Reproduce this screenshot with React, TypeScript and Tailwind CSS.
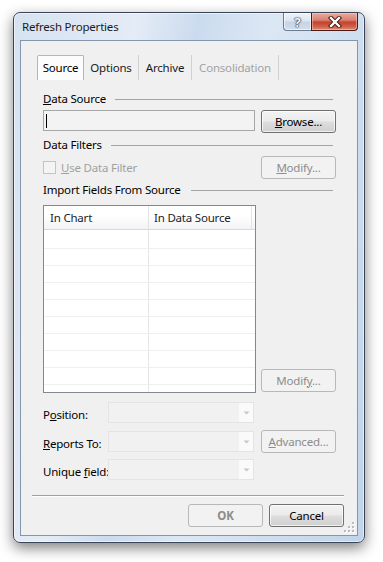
import React from "react";

const Btn = ({
  children,
  disabled,
  className = "",
}: {
  children: React.ReactNode;
  disabled?: boolean;
  className?: string;
}) => (
  <div
    className={
      "h-[23px] w-[75px] rounded-[3px] flex items-center justify-center shrink-0 " +
      (disabled
        ? "border border-[#b6b8bb] bg-[#f2f2f2] text-[#8c8c8c] "
        : "border border-[#707070] bg-[linear-gradient(#f3f3f3_0%,#ebebeb_48%,#dddddd_52%,#d0d0d0_100%)] shadow-[inset_0_0_0_1px_rgba(255,255,255,0.7)] text-black ") +
      className
    }
  >
    {children}
  </div>
);

const Combo = () => (
  <div className="w-[146px] h-[21px] flex border border-[#e4e4e4] bg-[#f1f1f1]">
    <div className="flex-1" />
    <div className="w-[14px] bg-[#fafafa] flex items-center justify-center">
      <svg width="7" height="4" viewBox="0 0 7 4">
        <path d="M0.5 0.5 L6.5 0.5 L3.5 3.5 Z" fill="#c6c6c6" />
      </svg>
    </div>
  </div>
);

export default function App() {
  const rows = Array.from({ length: 9 });
  return (
    <div className="w-[383px] h-[562px] bg-white pt-[12px] pl-[13px] font-['Noto_Sans','DejaVu_Sans',sans-serif] text-[11.5px] tracking-[-0.2px] leading-[16px] text-black">
      <div className="w-[352px] h-[531px] rounded-[7px] border border-[#3a4658] shadow-[inset_0_0_0_1px_rgba(255,255,255,0.55),0_5px_14px_rgba(0,0,0,0.5)] bg-[linear-gradient(100deg,#d6e2f0_0%,#e4ecf6_28%,#cbdbee_42%,#dce7f4_58%,#c0d4ea_100%)] flex flex-col overflow-hidden">
        {/* Title bar */}
        <div className="h-[27px] flex items-start shrink-0">
          <div className="pl-[8px] pt-[6px] text-[11.5px] text-[#1b1b1b] whitespace-nowrap">Refresh Properties</div>
          <div className="ml-auto mr-[6px] flex">
            <div className="w-[28px] h-[18px] border-l border-b border-[#6c7b90] rounded-bl-[4px] bg-[linear-gradient(#f0f4f9_0%,#dce5f0_45%,#c6d4e5_55%,#d2deec_100%)] shadow-[inset_0_0_0_1px_rgba(255,255,255,0.6)] flex items-center justify-center">
              <span className="font-bold text-[13px] leading-[14px] text-[#f4f6f9] [text-shadow:0_0_1px_#2e3a4a,0_0_1px_#2e3a4a,0_0_2px_#2e3a4a]">?</span>
            </div>
            <div className="w-[47px] h-[18px] border-l border-b border-r border-[#4a1a14] rounded-br-[4px] bg-[linear-gradient(#e8ab9f_0%,#d98474_40%,#c5432f_55%,#d0614c_80%,#e08d76_100%)] shadow-[inset_0_0_0_1px_rgba(255,220,210,0.45)] flex items-center justify-center">
              <svg width="14" height="12" viewBox="0 0 14 12">
                <path d="M3 2 L11 10 M11 2 L3 10" stroke="#3a1410" strokeWidth="4.2" strokeLinecap="square" />
                <path d="M3 2 L11 10 M11 2 L3 10" stroke="#ffffff" strokeWidth="2.4" strokeLinecap="square" />
              </svg>
            </div>
          </div>
        </div>

        {/* Client */}
        <div className="relative mx-[6px] mb-[6px] flex-1 border border-[#8496ad] bg-[#f0f0f0] flex flex-col">
          {/* Tabs */}
          <div className="ml-[16px] mt-[14px] h-[25px] flex">
            <div className="w-[47px] h-[25px] bg-[#fcfcfc] border-l border-r border-t border-[#b5b5b5] rounded-t-[2px] flex items-center justify-center">
              Source
            </div>
            <div className="w-[55px] border-r border-[#d0d0d0] flex items-center justify-center text-[#1a1a1a]">
              Options
            </div>
            <div className="w-[53px] border-r border-[#d0d0d0] flex items-center justify-center text-[#1a1a1a]">
              Archive
            </div>
            <div className="w-[87px] border-r border-[#d0d0d0] flex items-center justify-center text-[#a2a2a2]">
              Consolidation
            </div>
          </div>

          {/* Panel */}
          <div className="ml-[22px] w-[293px] flex flex-col">
            <div className="mt-[11px] h-[16px] flex items-center w-[290px]">
              <span className="whitespace-nowrap">
                <u>D</u>ata Source
              </span>
              <div className="flex-1 h-px bg-[#a3a3a3] ml-[9px]" />
            </div>
            <div className="mt-[3px] h-[23px] flex items-start">
              <div className="w-[212px] h-[21px] border border-[#a7a7a7] bg-[#f3f3f3] flex items-center pl-[2px]">
                <div className="w-px h-[14px] bg-black" />
              </div>
              <Btn className="ml-auto">
                <span>
                  <u>B</u>rowse...
                </span>
              </Btn>
            </div>

            <div className="mt-[4px] h-[16px] flex items-center w-[290px]">
              <span className="whitespace-nowrap">Data Filters</span>
              <div className="flex-1 h-px bg-[#a3a3a3] ml-[9px]" />
            </div>
            <div className="mt-[3px] h-[23px] flex items-center">
              <div className="w-[13px] h-[13px] border border-[#c4c4c4] bg-[#f4f4f4]" />
              <span className="ml-[5px] text-[#a0a0a0]">
                <u>U</u>se Data Filter
              </span>
              <Btn disabled className="ml-auto">
                <span>
                  <u>M</u>odify...
                </span>
              </Btn>
            </div>

            <div className="mt-[3px] h-[16px] flex items-center w-[290px]">
              <span className="whitespace-nowrap">Import Fields From Source</span>
              <div className="flex-1 h-px bg-[#a3a3a3] ml-[10px]" />
            </div>
            <div className="mt-[7px] h-[188px] flex items-end">
              <div className="w-[213px] h-[188px] border border-[#838790] bg-white flex flex-col overflow-hidden">
                <div className="h-[24px] shrink-0 flex border-b border-[#d8d8d8] bg-[linear-gradient(#ffffff_0%,#ffffff_40%,#f2f3f5_100%)]">
                  <div className="w-[105px] border-r border-[#e3e3e3] pl-[6px] flex items-center text-[#1c1c2c]">
                    In Chart
                  </div>
                  <div className="w-[103px] border-r border-[#e3e3e3] pl-[5px] flex items-center text-[#1c1c2c]">
                    In Data Source
                  </div>
                </div>
                {rows.map((_, i) => (
                  <div
                    key={i}
                    className={(i === 0 ? "h-[19px] " : "h-[17px] ") + "shrink-0 flex border-b border-[#efefef]"}
                  >
                    <div className="w-[105px] border-r border-[#e6e6e6]" />
                  </div>
                ))}
                <div className="flex-1 flex">
                  <div className="w-[105px] border-r border-[#e6e6e6]" />
                </div>
              </div>
              <Btn disabled className="ml-auto mb-[1px]">
                <span>
                  Modif<u>y</u>...
                </span>
              </Btn>
            </div>

            <div className="mt-[9px] h-[21px] flex items-center">
              <span className="w-[65px] shrink-0 pt-[4px] whitespace-nowrap">
                P<u>o</u>sition:
              </span>
              <Combo />
            </div>
            <div className="mt-[8px] h-[21px] flex items-center">
              <span className="w-[65px] shrink-0 pt-[4px] whitespace-nowrap">
                <u>R</u>eports To:
              </span>
              <Combo />
              <Btn disabled className="ml-auto">
                <span>
                  <u>A</u>dvanced...
                </span>
              </Btn>
            </div>
            <div className="mt-[7px] h-[21px] flex items-center">
              <span className="w-[65px] shrink-0 pt-[4px] whitespace-nowrap">
                Unique <u>f</u>ield:
              </span>
              <Combo />
            </div>
          </div>

          {/* Separator */}
          <div className="mt-[15px] ml-[11px] w-[312px] h-px bg-[#a0a0a0] shadow-[0_1px_0_#ffffff]" />

          {/* Bottom buttons */}
          <div className="mt-[8px] flex justify-end pr-[13px]">
            <Btn disabled className="w-[74px] font-bold">
              OK
            </Btn>
            <Btn className="ml-[6px]">Cancel</Btn>
          </div>

          {/* Size grip */}
          <svg className="absolute right-[2px] bottom-[2px]" width="11" height="11" viewBox="0 0 11 11">
            {[
              [8, 0],
              [8, 4],
              [4, 4],
              [8, 8],
              [4, 8],
              [0, 8],
            ].map(([x, y], i) => (
              <g key={i}>
                <rect x={x + 1} y={y + 1} width="2" height="2" fill="#ffffff" />
                <rect x={x} y={y} width="2" height="2" fill="#b8bcc2" />
              </g>
            ))}
          </svg>
        </div>
      </div>
    </div>
  );
}
